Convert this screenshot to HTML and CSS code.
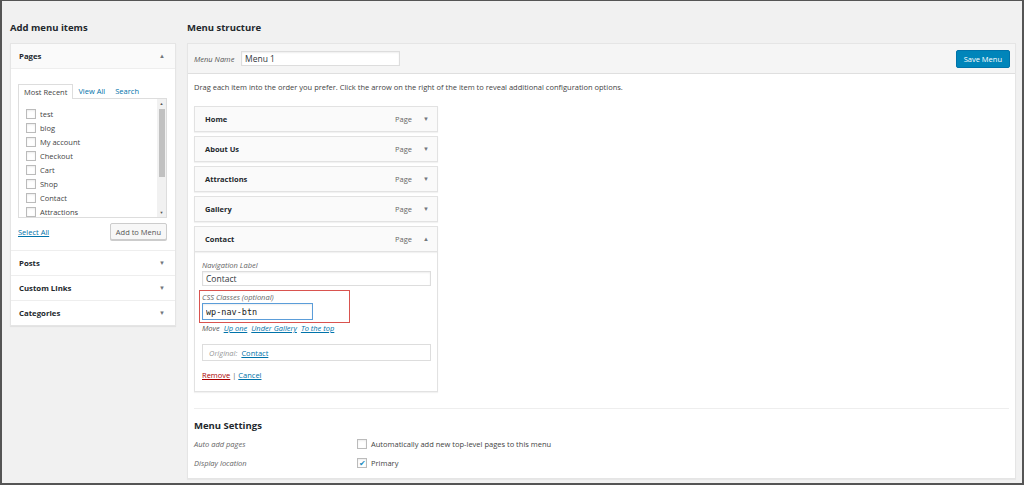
FILE: index.html
```html
<!DOCTYPE html>
<html lang="en">
<head>
    <meta charset="UTF-8">
    <title>Menus</title>
    <link rel="stylesheet" href="styles.css">
</head>
<body>
<div class="frame">
    <div class="side">
        <h2 class="title">Add menu items</h2>
        <div class="accordion">
            <div class="acc-head open">Pages <span class="caret">&#9650;</span></div>
            <div class="acc-body">
                <div class="tabs">
                    <span class="tab active">Most Recent</span>
                    <span class="tab">View All</span>
                    <span class="tab">Search</span>
                </div>
                <div class="listbox">
                    <ul class="pages">
                        <li><span class="box"></span>test</li>
                        <li><span class="box"></span>blog</li>
                        <li><span class="box"></span>My account</li>
                        <li><span class="box"></span>Checkout</li>
                        <li><span class="box"></span>Cart</li>
                        <li><span class="box"></span>Shop</li>
                        <li><span class="box"></span>Contact</li>
                        <li><span class="box"></span>Attractions</li>
                    </ul>
                    <div class="scrollbar">
                        <span class="arrow">&#9650;</span>
                        <div class="thumb"></div>
                        <span class="arrow">&#9660;</span>
                    </div>
                </div>
                <div class="acc-actions">
                    <a class="link">Select All</a>
                    <button class="btn">Add to Menu</button>
                </div>
            </div>
            <div class="acc-head">Posts <span class="caret">&#9660;</span></div>
            <div class="acc-head">Custom Links <span class="caret">&#9660;</span></div>
            <div class="acc-head">Categories <span class="caret">&#9660;</span></div>
        </div>
    </div>

    <div class="main">
        <h2 class="title">Menu structure</h2>
        <div class="menu-box">
            <div class="menu-head">
                <label class="menu-name">Menu Name</label>
                <input class="field name-field" type="text" value="Menu 1">
                <button class="btn-primary">Save Menu</button>
            </div>
            <div class="menu-body">
                <p class="hint">Drag each item into the order you prefer. Click the arrow on the right of the item to reveal additional configuration options.</p>
                <div class="item"><b>Home</b><span class="type">Page</span><span class="caret">&#9660;</span></div>
                <div class="item"><b>About Us</b><span class="type">Page</span><span class="caret">&#9660;</span></div>
                <div class="item"><b>Attractions</b><span class="type">Page</span><span class="caret">&#9660;</span></div>
                <div class="item"><b>Gallery</b><span class="type">Page</span><span class="caret">&#9660;</span></div>
                <div class="item open"><b>Contact</b><span class="type">Page</span><span class="caret">&#9650;</span></div>
                <div class="item-settings">
                    <label class="lbl">Navigation Label</label>
                    <input class="field wide" type="text" value="Contact">
                    <div class="highlight">
                        <label class="lbl">CSS Classes (optional)</label>
                        <input class="field code" type="text" value="wp-nav-btn">
                    </div>
                    <div class="move"><i>Move</i> <a class="link">Up one</a> <a class="link">Under Gallery</a> <a class="link">To the top</a></div>
                    <div class="original"><i>Original:</i> <a class="link">Contact</a></div>
                    <div class="actions"><a class="link danger">Remove</a> | <a class="link">Cancel</a></div>
                </div>

                <div class="settings">
                    <h3>Menu Settings</h3>
                    <div class="row">
                        <span class="row-label">Auto add pages</span>
                        <span class="box"></span>
                        <span>Automatically add new top-level pages to this menu</span>
                    </div>
                    <div class="row">
                        <span class="row-label">Display location</span>
                        <span class="box checked">&#10004;</span>
                        <span>Primary</span>
                    </div>
                </div>
            </div>
        </div>
    </div>
</div>
</body>
</html>
```

FILE: styles.css
```css
*{
    margin: 0;
    padding: 0;
    box-sizing: border-box;
}
body{
    font-family: "Open Sans", "Noto Sans", sans-serif;
    font-size: 7.5px;
    color: #444;
}
.frame{
    width: 1024px;
    height: 485px;
    border: 2px solid #555;
    border-top-width: 1px;
    background-color: #f1f1f1;
    display: flex;
    gap: 11px;
    padding: 0 6px 0 8px;
    overflow: hidden;
}
.title{
    font-size: 9.5px;
    font-weight: 700;
    color: #23282d;
    height: 42px;
    padding-top: 20px;
}
.side{
    width: 166px;
}
.accordion{
    background-color: #fff;
    border: 1px solid #e5e5e5;
    box-shadow: 0 1px 1px rgba(0,0,0,.06);
}
.acc-head{
    height: 25px;
    display: flex;
    align-items: center;
    justify-content: space-between;
    padding: 0 10px 1px 8px;
    font-weight: 700;
    font-size: 7.8px;
    color: #23282d;
    border-top: 1px solid #eee;
}
.acc-head.open{
    border-top: none;
    background-color: #fafafa;
    border-bottom: 1px solid #eee;
}
.caret{
    font-size: 6px;
    color: #72777c;
}
.acc-body{
    padding: 14px 8px 10px 7px;
}
.tabs{
    display: flex;
    align-items: flex-end;
    height: 15px;
}
.tab{
    padding: 0 5px;
    line-height: 14px;
    color: #0073aa;
}
.tab.active{
    color: #444;
    background-color: #fff;
    border: 1px solid #ddd;
    border-bottom: none;
    margin-bottom: -1px;
    position: relative;
}
.listbox{
    border: 1px solid #ddd;
    height: 120px;
    display: flex;
    justify-content: space-between;
}
.pages{
    list-style: none;
    padding: 8px 0 0 7px;
}
.pages li{
    height: 14px;
    display: flex;
    align-items: center;
    gap: 4px;
}
.box{
    width: 10px;
    height: 10px;
    border: 1px solid #bbb;
    background-color: #fff;
    display: inline-block;
    box-shadow: inset 0 1px 2px rgba(0,0,0,.08);
}
.box.checked{
    color: #1e8cbe;
    font-size: 8px;
    line-height: 8px;
    text-align: center;
}
.scrollbar{
    width: 9px;
    display: flex;
    flex-direction: column;
    align-items: center;
    background-color: #f1f1f1;
    font-size: 4px;
    color: #555;
}
.arrow{
    height: 9px;
    line-height: 9px;
}
.thumb{
    width: 6px;
    height: 68px;
    background-color: #c1c1c1;
    margin-top: 1px;
}
.scrollbar .arrow:last-child{
    margin-top: auto;
}
.acc-actions{
    display: flex;
    justify-content: space-between;
    align-items: center;
    margin-top: 5px;
}
.link{
    color: #0073aa;
    text-decoration: underline;
}
.btn{
    font-family: inherit;
    font-size: 7.5px;
    color: #555;
    background-color: #f7f7f7;
    border: 1px solid #ccc;
    border-radius: 2px;
    height: 17px;
    padding: 0 5px;
    box-shadow: 0 1px 0 #ccc;
}
.main{
    flex: 1;
}
.menu-box{
    background-color: #fff;
    border: 1px solid #e5e5e5;
    height: 436px;
    box-shadow: 0 1px 1px rgba(0,0,0,.04);
}
.menu-head{
    height: 30px;
    background-color: #f5f5f5;
    border-bottom: 1px solid #dfdfdf;
    display: flex;
    align-items: center;
    padding: 0 5px 0 6px;
}
.menu-name{
    font-style: italic;
    color: #555;
    width: 47px;
}
.field{
    font-family: inherit;
    font-size: 8.5px;
    color: #32373c;
    border: 1px solid #ddd;
    height: 15px;
    padding: 0 3px;
    box-shadow: inset 0 1px 2px rgba(0,0,0,.07);
    outline: none;
}
.name-field{
    width: 159px;
}
.btn-primary{
    margin-left: auto;
    font-family: inherit;
    font-size: 7.5px;
    color: #fff;
    background-color: #0085ba;
    border: 1px solid #0073aa;
    border-radius: 2px;
    height: 18px;
    padding: 0 7px;
}
.menu-body{
    padding: 8px 6px 0 6px;
}
.hint{
    height: 24px;
    color: #444;
}
.item{
    width: 244px;
    height: 26px;
    border: 1px solid #e2e2e2;
    background-color: #fafafa;
    display: flex;
    align-items: center;
    padding: 0 8px 0 10px;
    margin-bottom: 4px;
    box-shadow: 0 1px 1px rgba(0,0,0,.05);
}
.item b{
    color: #23282d;
    flex: 1;
}
.type{
    color: #666;
    margin-right: 11px;
}
.item.open{
    margin-bottom: 0;
}
.item-settings{
    width: 244px;
    height: 140px;
    border: 1px solid #e2e2e2;
    border-top: none;
    padding: 8px 7px 0 7px;
    box-shadow: 0 1px 1px rgba(0,0,0,.05);
}
.lbl{
    display: block;
    font-style: italic;
    color: #666;
    line-height: 11px;
}
.wide{
    width: 229px;
    margin-bottom: 4px;
}
.highlight{
    width: 151px;
    height: 33px;
    margin-left: -3px;
    border: 1px solid #d9534f;
    padding: 1px 0 0 2px;
}
.code{
    font-family: "DejaVu Sans Mono", monospace;
    font-size: 8.5px;
    width: 111px;
    height: 17px;
    border-color: #5b9dd9;
    color: #222;
}
.move{
    margin-top: 0;
    line-height: 11px;
}
.move i{
    color: #555;
}
.move .link{
    font-style: italic;
    margin-left: 2px;
}
.original{
    margin-top: 10px;
    width: 229px;
    height: 17px;
    border: 1px solid #ddd;
    display: flex;
    align-items: center;
    gap: 4px;
    padding: 0 6px;
}
.original i{
    color: #999;
}
.actions{
    margin-top: 9px;
    color: #666;
}
.danger{
    color: #a00;
}
.settings{
    margin-top: 16px;
    border-top: 1px solid #eee;
    padding-top: 10px;
}
.settings h3{
    font-size: 9.5px;
    font-weight: 700;
    color: #23282d;
    margin-bottom: 2px;
}
.row{
    display: flex;
    align-items: center;
    gap: 4px;
    height: 19px;
}
.row-label{
    width: 159px;
    font-style: italic;
    color: #666;
}
```
